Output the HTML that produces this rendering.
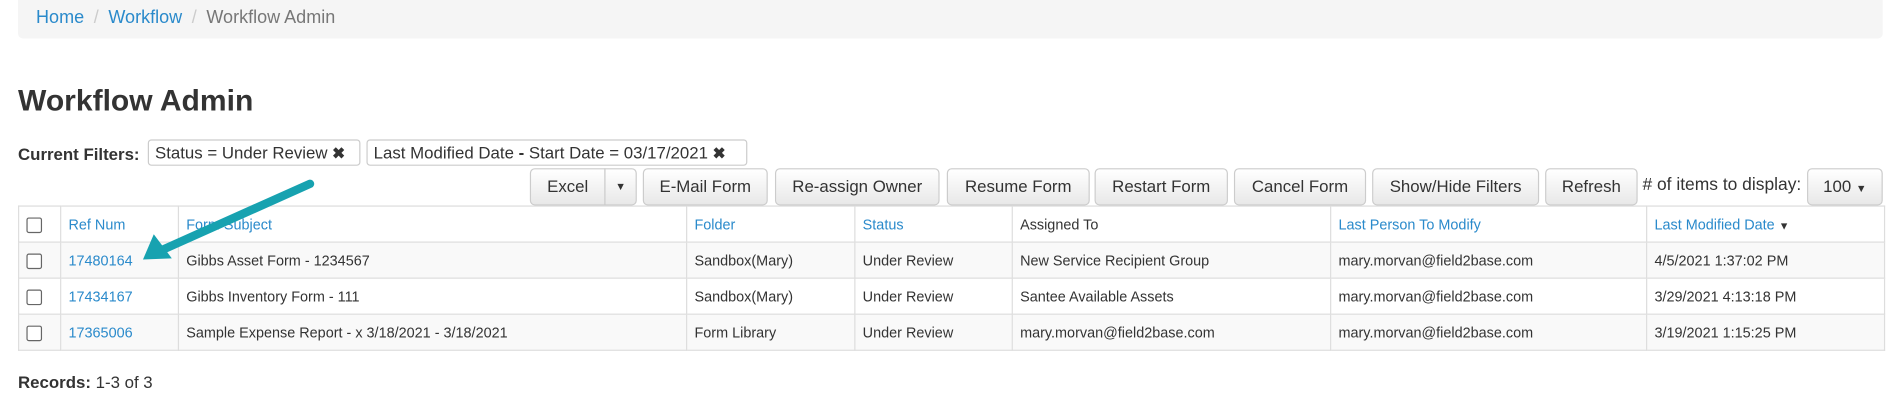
<!DOCTYPE html>
<html><head><meta charset="utf-8"><style>
html,body{margin:0;padding:0;width:1887px;height:411px;overflow:hidden;background:#fff}
#w{position:absolute;left:0;top:0;width:1571px;height:342px;transform:scale(1.2015);transform-origin:0 0;font-family:"Liberation Sans",Arial,sans-serif;font-size:14px;color:#333}
.a{position:absolute}
a,.lk{color:#2a8acb;text-decoration:none}
.bc{left:15px;top:-8px;width:1552px;height:40px;background:#f5f5f5;border-radius:4px}
.bct{left:30px;top:6px;white-space:nowrap;font-size:15px}
.sep{color:#ccc;padding:0 8px}
h1{position:absolute;left:15px;top:70px;margin:0;font-size:25px;font-weight:bold;color:#333}
.tag{position:absolute;top:116px;height:22px;border:1px solid #ccc;border-radius:3px;line-height:21px;padding:0 5px;box-sizing:border-box;white-space:nowrap;background:#fff}
.btn{position:absolute;top:140px;height:31px;border:1px solid #ccc;border-radius:4px;box-sizing:border-box;background:linear-gradient(#fff,#e8e8e8);text-align:center;line-height:29px;font-size:14px;color:#333;white-space:nowrap}
table{position:absolute;left:15px;top:171px;width:1553px;border-collapse:collapse;table-layout:fixed}
td{border:1px solid #ddd;height:29px;padding:0 6px;font-size:12px;white-space:nowrap;overflow:hidden}
tr.s td{background:#f9f9f9}
.cb{width:11px;height:11px;border:1px solid #666;border-radius:2px;display:inline-block;vertical-align:middle;background:#fff}
.x{font-size:13px;font-weight:bold}
</style></head><body><div id="w">
<div class="a bc"></div>
<div class="a bct"><a>Home</a><span class="sep">/</span><a>Workflow</a><span class="sep">/</span><span style="color:#777">Workflow Admin</span></div>
<h1>Workflow Admin</h1>
<div class="a" style="left:15px;top:120px;font-weight:bold;font-size:14px">Current Filters:</div>
<div class="tag" style="left:123px;width:177px">Status = Under Review <span class="x">&#10006;</span></div>
<div class="tag" style="left:305px;width:317px">Last Modified Date <b>-</b> Start Date = 03/17/2021 <span class="x">&#10006;</span></div>
<div class="btn" style="left:441px;width:63px;border-radius:4px 0 0 4px">Excel</div>
<div class="btn" style="left:503px;width:27px;border-radius:0 4px 4px 0;font-size:9px">&#9660;</div>
<div class="btn" style="left:535px;width:104px">E-Mail Form</div>
<div class="btn" style="left:645px;width:137px">Re-assign Owner</div>
<div class="btn" style="left:788px;width:119px">Resume Form</div>
<div class="btn" style="left:911px;width:111px">Restart Form</div>
<div class="btn" style="left:1027px;width:110px">Cancel Form</div>
<div class="btn" style="left:1142px;width:139px">Show/Hide Filters</div>
<div class="btn" style="left:1286px;width:77px">Refresh</div>
<div class="a" style="left:1367px;top:146px;font-size:14.5px">#&nbsp;of items to display:</div>
<div class="btn" style="left:1504px;width:63px">100 <span style="font-size:9px">&#9660;</span></div>
<table>
<colgroup><col style="width:35px"><col style="width:98px"><col style="width:423px"><col style="width:140px"><col style="width:131px"><col style="width:265px"><col style="width:263px"><col style="width:198px"></colgroup>
<tr><td><span class="cb"></span></td><td class="lk">Ref Num</td><td class="lk">Form Subject</td><td class="lk">Folder</td><td class="lk">Status</td><td>Assigned To</td><td class="lk">Last Person To Modify</td><td class="lk">Last Modified Date <span style="color:#333;font-size:9px">&#9660;</span></td></tr>
<tr class="s"><td><span class="cb"></span></td><td class="lk">17480164</td><td>Gibbs Asset Form - 1234567</td><td>Sandbox(Mary)</td><td>Under Review</td><td>New Service Recipient Group</td><td>mary.morvan@field2base.com</td><td>4/5/2021 1:37:02 PM</td></tr>
<tr><td><span class="cb"></span></td><td class="lk">17434167</td><td>Gibbs Inventory Form - 111</td><td>Sandbox(Mary)</td><td>Under Review</td><td>Santee Available Assets</td><td>mary.morvan@field2base.com</td><td>3/29/2021 4:13:18 PM</td></tr>
<tr class="s"><td><span class="cb"></span></td><td class="lk">17365006</td><td>Sample Expense Report - x 3/18/2021 - 3/18/2021</td><td>Form Library</td><td>Under Review</td><td>mary.morvan@field2base.com</td><td>mary.morvan@field2base.com</td><td>3/19/2021 1:15:25 PM</td></tr>
</table>
<svg class="a" style="left:0;top:0" width="400" height="260"><line x1="258" y1="153" x2="135" y2="208" stroke="#17a2b0" stroke-width="7" stroke-linecap="round"/><polygon points="119,216 128,195 143,215" fill="#17a2b0"/></svg>
<div class="a" style="left:15px;top:310px;font-size:14px"><b>Records:</b> 1-3 of 3</div>
</div></body></html>
